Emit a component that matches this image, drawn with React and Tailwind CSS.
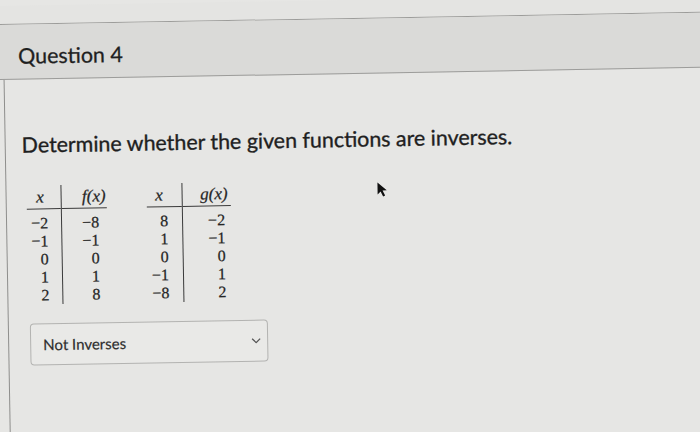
import React from 'react';

const tableA = [
  ['−2', '−8'],
  ['−1', '−1'],
  ['0', '0'],
  ['1', '1'],
  ['2', '8'],
];

const tableB = [
  ['8', '−2'],
  ['1', '−1'],
  ['0', '0'],
  ['−1', '1'],
  ['−8', '2'],
];

const ValueTable = ({ rows, fn, leftW, rightW, xPad, vPad, fPad, wPad }) => {
  return (
    <div className="flex font-['Liberation_Serif',serif] text-[16px] text-[#262626] [-webkit-text-stroke:0.25px_#262626]">
      {/* x column */}
      <div className={`${leftW} border-r border-[#3a3a3a]`}>
        <div className={`flex h-[24px] items-center justify-end border-b border-[#3a3a3a] text-[17px] italic ${xPad}`}>
          x
        </div>
        <div className={`pt-[5px] text-right leading-[18px] ${vPad}`}>
          {rows.map((r, i) => (
            <div key={i}>{r[0]}</div>
          ))}
        </div>
      </div>
      {/* f(x) / g(x) column */}
      <div className={rightW}>
        <div className={`flex h-[24px] items-center justify-end border-b border-[#3a3a3a] text-[17px] italic ${fPad}`}>
          {fn}(x)
        </div>
        <div className={`pt-[5px] text-right leading-[18px] ${wPad}`}>
          {rows.map((r, i) => (
            <div key={i}>{r[1]}</div>
          ))}
        </div>
      </div>
    </div>
  );
};

const App = () => {
  return (
    <div className="relative h-[432px] w-[700px] overflow-hidden bg-[#e6e6e4] font-['Lato','Noto_Sans',sans-serif]">
      <div className="relative h-[432px] w-[700px] -rotate-1">
        {/* Top strip */}
        <div className="-mx-[30px] h-[19px] border-b border-[#9c9c9a] bg-[#e4e4e2]" />

        {/* Header */}
        <div className="-mx-[30px] h-[55px] border-b border-[#9c9c9a] bg-[#dadad8] pl-[51px] pt-[16px]">
          <h1 className="text-[21.4px] leading-[30px] text-[#1f1f1f] [-webkit-text-stroke:0.3px_#1f1f1f]">
            Question 4
          </h1>
        </div>

        {/* Question body */}
        <div className="ml-[6px] flex h-[420px] flex-col items-start border-l border-[#8e8e8c] pl-[16px] pt-[54px]">
          <p className="text-[21.4px] leading-[22px] text-[#1f1f1f] [-webkit-text-stroke:0.35px_#1f1f1f]">
            Determine whether the given functions are inverses.
          </p>

          <div className="ml-[4px] mt-[30px] flex gap-[40px]">
            <ValueTable
              rows={tableA}
              fn="f"
              leftW="w-[35px]"
              rightW="w-[45px]"
              xPad="pr-[17px]"
              vPad="pr-[13px]"
              fPad="pr-[1px]"
              wPad="pr-[8px]"
            />
            <ValueTable
              rows={tableB}
              fn="g"
              leftW="w-[36px]"
              rightW="w-[48px]"
              xPad="pr-[19px]"
              vPad="pr-[14px]"
              fPad="pr-[3px]"
              wPad="pr-[6px]"
            />
          </div>

          {/* Answer select */}
          <div className="ml-[5px] mt-[19px] flex h-[42px] w-[238px] items-center justify-between rounded-[4px] border border-[#b3b3b1] bg-[#e9e9e7] pl-[12px] pr-[6px]">
            <span className="text-[15px] text-[#2e2e2e] [-webkit-text-stroke:0.2px_#2e2e2e]">Not Inverses</span>
            <svg width="10" height="6" viewBox="0 0 10 6" fill="none">
              <path d="M1 1l4 4 4-4" stroke="#555" strokeWidth="1.3" />
            </svg>
          </div>
        </div>

        {/* Mouse pointer */}
        <svg
          className="absolute left-[377px] top-[182px]"
          width="11"
          height="16"
          viewBox="0 0 11 16"
        >
          <path d="M1 1v12l3-3 2.5 5 2-1-2.5-5h4.2z" fill="#111" />
        </svg>
      </div>
    </div>
  );
};

export default App;
